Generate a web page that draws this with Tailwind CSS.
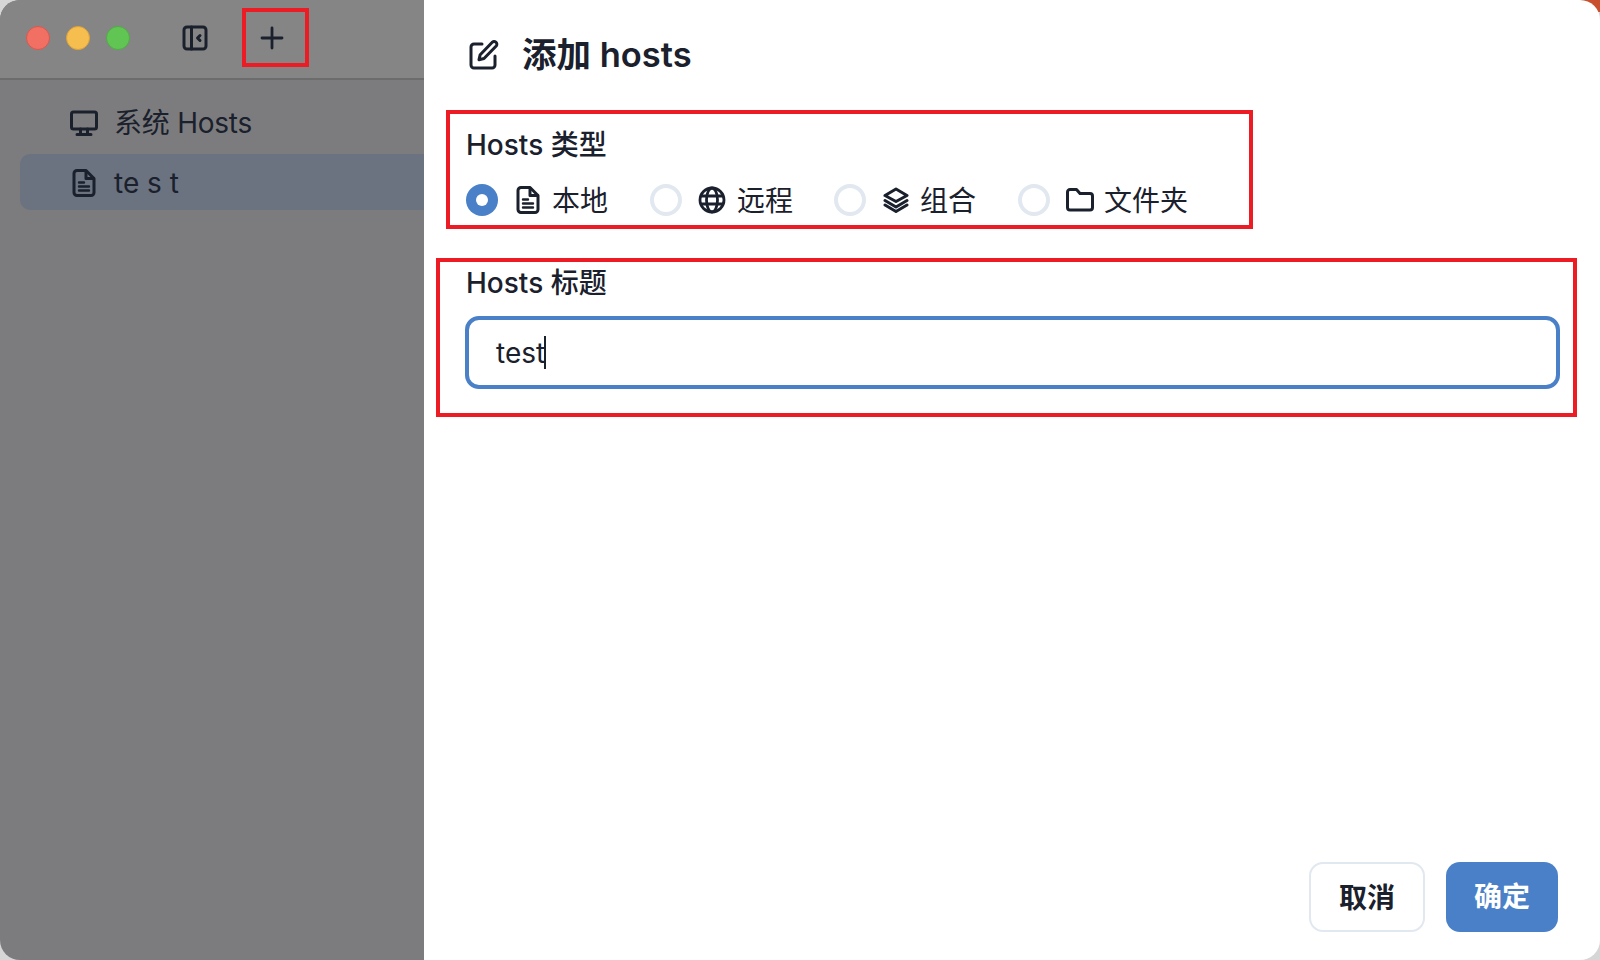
<!DOCTYPE html>
<html lang="zh">
<head>
<meta charset="utf-8">
<script src="https://cdn.jsdelivr.net/npm/@tailwindcss/browser@4"></script>
<title>添加 hosts</title>
</head>
<body class="m-0 bg-[#d8d8d8]">
<div class="relative w-[1600px] h-[960px] overflow-hidden bg-[#d6d6d6] font-['Inter','Noto_Sans_CJK_SC',sans-serif] text-[#1a202c]">
  <div class="absolute right-0 top-0 w-[24px] h-[12px] bg-[#c9502f]"></div>
  <div class="relative flex w-full h-full">
    <aside class="w-[424px] h-full shrink-0 flex flex-col bg-[#7c7c7e] rounded-l-[20px] overflow-hidden">
      <div class="h-[80px] shrink-0 flex items-center bg-[#858585] border-b-2 border-[#6c6c6c] pl-[26px] pb-[2px]">
        <span class="w-[24px] h-[24px] rounded-full bg-[#f26f63] border border-[#d8584e]"></span>
        <span class="w-[24px] h-[24px] rounded-full bg-[#f6be4f] border border-[#dca23a] ml-[16px]"></span>
        <span class="w-[24px] h-[24px] rounded-full bg-[#61c554] border border-[#50ac45] ml-[16px]"></span>
        <svg class="w-[26px] h-[26px] ml-[52px]" viewBox="0 0 26 26" fill="none" stroke="#1a202c" stroke-width="3" stroke-linecap="round" stroke-linejoin="round"><rect x="2" y="2" width="22" height="22" rx="3"/><path d="M9.500 2v22"/><path d="M18 10.500 15.500 13l2.500 2.500"/></svg>
        <svg class="w-[24px] h-[24px] ml-[52px]" viewBox="0 0 24 24" fill="none" stroke="#1a202c" stroke-width="2.800" stroke-linecap="round"><path d="M12 2v20M2 12h20"/></svg>
      </div>
      <div class="flex flex-col pl-[20px] pt-[14px]">
        <div class="h-[56px] flex items-center pl-[50px] gap-[16px] text-[28px] leading-none tracking-[-0.25px] pt-[1px]">
          <svg class="w-[28px] h-[28px] shrink-0" viewBox="0 0 28 28" fill="none" stroke="#1a202c" stroke-width="3" stroke-linecap="round" stroke-linejoin="round"><rect x="1.500" y="3" width="25" height="17" rx="2"/><path d="M10.500 20v5M17.500 20v5M7 25.500h14"/></svg>
          <span>系统 Hosts</span>
        </div>
        <div class="h-[56px] mt-[4px] flex items-center pl-[52px] gap-[18px] text-[28px] leading-none bg-[#6b7280] rounded-l-[10px] pt-[1px]">
          <svg class="w-[24px] h-[28px] shrink-0" viewBox="0 0 24 28" fill="none" stroke="#1a202c" stroke-width="3" stroke-linecap="round" stroke-linejoin="round"><path d="M14 1.500H5a3 3 0 0 0-3 3v19a3 3 0 0 0 3 3h14a3 3 0 0 0 3-3V9.500z"/><path d="M14 2v7.500h7.500"/><path stroke-width="2.400" d="M7 13.500h5M7 17.500h10M7 21.500h10"/></svg>
          <span>te s t</span>
        </div>
      </div>
    </aside>

    <main class="flex-1 h-full flex flex-col bg-white rounded-r-[20px] pl-[42px] pr-[40px]">
      <div class="h-[110px] shrink-0 flex items-center pl-[3px] gap-[23px] font-semibold text-[34.500px] leading-none">
        <svg class="w-[30px] h-[30px] shrink-0" viewBox="0 0 30 30" fill="none" stroke="#1a202c" stroke-width="3" stroke-linecap="round" stroke-linejoin="round"><path d="M13 4H5a3 3 0 0 0-3 3v18a3 3 0 0 0 3 3h18a3 3 0 0 0 3-3v-9"/><path d="M23 2.500a2.600 2.600 0 0 1 4.200 3.500L15 18.500l-5 1.200 1.200-5z"/></svg>
        <span>添加 hosts</span>
      </div>

      <div class="h-[28px] mt-[21px] flex items-center text-[28px] font-medium leading-none">Hosts 类型</div>

      <div class="mt-[25px] h-[32px] flex items-center text-[28px] leading-none">
        <div class="flex items-center gap-[42px]">
          <div class="flex items-center w-[142px] shrink-0">
            <span class="w-[32px] h-[32px] shrink-0 rounded-full bg-[#4a80c8] flex items-center justify-center"><span class="w-[12px] h-[12px] rounded-full bg-white"></span></span>
            <svg class="w-[24px] h-[28px] ml-[18px] shrink-0" viewBox="0 0 24 28" fill="none" stroke="#1a202c" stroke-width="3" stroke-linecap="round" stroke-linejoin="round"><path d="M14 1.500H5a3 3 0 0 0-3 3v19a3 3 0 0 0 3 3h14a3 3 0 0 0 3-3V9.500z"/><path d="M14 2v7.500h7.500"/><path stroke-width="2.400" d="M7 13.500h5M7 17.500h10M7 21.500h10"/></svg>
            <span class="ml-[12px] pt-[2px] whitespace-nowrap">本地</span>
          </div>
          <div class="flex items-center w-[142px] shrink-0">
            <span class="w-[32px] h-[32px] shrink-0 rounded-full border-4 border-[#e2e8f0]"></span>
            <svg class="w-[28px] h-[28px] ml-[16px] shrink-0" viewBox="0 0 28 28" fill="none" stroke="#1a202c" stroke-width="2.800"><circle cx="14" cy="14" r="12"/><ellipse cx="14" cy="14" rx="5.500" ry="12"/><path d="M2 10h24M2 18h24"/></svg>
            <span class="ml-[11px] pt-[2px] whitespace-nowrap">远程</span>
          </div>
          <div class="flex items-center w-[142px] shrink-0">
            <span class="w-[32px] h-[32px] shrink-0 rounded-full border-4 border-[#e2e8f0]"></span>
            <svg class="w-[26px] h-[26px] ml-[17px] shrink-0" viewBox="0 0 26 26" fill="none" stroke="#1a202c" stroke-width="3" stroke-linejoin="round" stroke-linecap="round"><path d="M13 2 24 8.500 13 14.500 2 8.500z"/><path d="M2 13.500 13 20l11-6.500"/><path d="M2 18 13 24.500 24 18"/></svg>
            <span class="ml-[11px] pt-[2px] whitespace-nowrap">组合</span>
          </div>
          <div class="flex items-center w-[142px] shrink-0">
            <span class="w-[32px] h-[32px] shrink-0 rounded-full border-4 border-[#e2e8f0]"></span>
            <svg class="w-[28px] h-[24px] ml-[16px] shrink-0" viewBox="0 0 28 24" fill="none" stroke="#1a202c" stroke-width="3" stroke-linejoin="round"><path d="M1.500 4a2.500 2.500 0 0 1 2.500-2.500h6.500l3.500 4h10a2.500 2.500 0 0 1 2.500 2.500v11.500a2.500 2.500 0 0 1-2.500 2.500H4a2.500 2.500 0 0 1-2.500-2.500z"/></svg>
            <span class="ml-[10px] pt-[2px] whitespace-nowrap">文件夹</span>
          </div>
        </div>
      </div>

      <div class="h-[28px] mt-[53px] flex items-center text-[28px] font-medium leading-none">Hosts 标题</div>

      <div class="mt-[19px] h-[73px] -ml-[1px] rounded-[14px] border-4 border-[#4a80c8] flex items-center pl-[27px] text-[28px] leading-none">
        <span>test</span><span class="w-[2px] h-[33px] -ml-[1px] bg-[#1a202c]"></span>
      </div>

      <div class="mt-auto mb-[28px] flex justify-end gap-[21px] pr-[2px] text-[28px] font-semibold leading-none">
        <button class="w-[116px] h-[70px] rounded-[14px] border-2 border-[#e2e8f0] bg-white text-[#1a202c] pt-[1px]">取消</button>
        <button class="w-[112px] h-[70px] rounded-[14px] bg-[#4a80c8] text-white">确定</button>
      </div>
    </main>
  </div>

  <div class="absolute left-[242px] top-[8px] w-[67px] h-[59px] border-4 border-[#ed1c24]"></div>
  <div class="absolute left-[446px] top-[110px] w-[807px] h-[119px] border-4 border-[#ed1c24]"></div>
  <div class="absolute left-[436px] top-[258px] w-[1141px] h-[159px] border-4 border-[#ed1c24]"></div>
</div>
</body>
</html>
